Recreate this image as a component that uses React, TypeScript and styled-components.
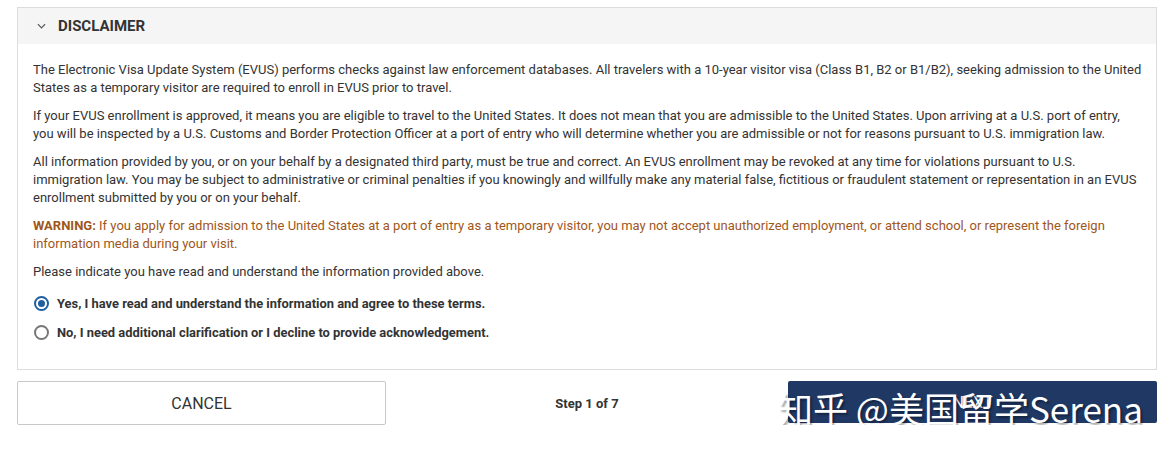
import React, { useState } from "react";
import styled, { createGlobalStyle } from "styled-components";

const GlobalStyle = createGlobalStyle`
  body {
    margin: 0;
    background: #ffffff;
    font-family: Roboto, "Liberation Sans", Arial, sans-serif;
    color: #333333;
  }
`;

const paragraphs = [
  "The Electronic Visa Update System (EVUS) performs checks against law enforcement databases. All travelers with a 10-year visitor visa (Class B1, B2 or B1/B2), seeking admission to the United States as a temporary visitor are required to enroll in EVUS prior to travel.",
  "If your EVUS enrollment is approved, it means you are eligible to travel to the United States. It does not mean that you are admissible to the United States. Upon arriving at a U.S. port of entry, you will be inspected by a U.S. Customs and Border Protection Officer at a port of entry who will determine whether you are admissible or not for reasons pursuant to U.S. immigration law.",
  "All information provided by you, or on your behalf by a designated third party, must be true and correct. An EVUS enrollment may be revoked at any time for violations pursuant to U.S. immigration law. You may be subject to administrative or criminal penalties if you knowingly and willfully make any material false, fictitious or fraudulent statement or representation in an EVUS enrollment submitted by you or on your behalf.",
];

const options = [
  "Yes, I have read and understand the information and agree to these terms.",
  "No, I need additional clarification or I decline to provide acknowledgement.",
];

function App() {
  const [choice, setChoice] = useState(0);

  return (
    <>
      <GlobalStyle />
      <Page>
        <Card>
          <CardHeader>
            <Chevron viewBox="0 0 10 6">
              <path d="M1 1l4 4 4-4" fill="none" stroke="#555" strokeWidth="1.3" />
            </Chevron>
            <HeaderTitle>DISCLAIMER</HeaderTitle>
          </CardHeader>
          <CardBody>
            {paragraphs.map((p) => (
              <Text key={p.slice(0, 20)}>{p}</Text>
            ))}
            <Warning>
              <strong>WARNING:</strong> If you apply for admission to the United States at a port of entry as a temporary visitor, you may not accept unauthorized employment, or attend school, or represent the foreign information media during your visit.
            </Warning>
            <Text>Please indicate you have read and understand the information provided above.</Text>
            <Options>
              {options.map((label, i) => (
                <Option key={label} onClick={() => setChoice(i)}>
                  <Radio $checked={choice === i} />
                  <OptionLabel>{label}</OptionLabel>
                </Option>
              ))}
            </Options>
          </CardBody>
        </Card>

        <Footer>
          <CancelButton>CANCEL</CancelButton>
          <StepText>Step 1 of 7</StepText>
          <NextWrap>
            <NextButton>NEXT</NextButton>
            <Watermark>知乎 @美国留学Serena</Watermark>
          </NextWrap>
        </Footer>
      </Page>
    </>
  );
}

export default App;

const Page = styled.div`
  width: 1140px;
  padding: 7px 15px 0 17px;
`;

const Card = styled.div`
  border: 1px solid #dcdcdc;
  background: #fff;
`;

const CardHeader = styled.div`
  height: 36px;
  display: flex;
  align-items: center;
  padding-left: 19px;
  background: #f5f5f5;
`;

const Chevron = styled.svg`
  width: 9px;
  height: 6px;
  margin-right: 12px;
`;

const HeaderTitle = styled.span`
  font-size: 15px;
  font-weight: 700;
  color: #333;
`;

const CardBody = styled.div`
  padding: 17px 14px 28px 15px;
`;

const Text = styled.p`
  margin: 0 0 10px 0;
  font-size: 13px;
  line-height: 18px;
  color: #333;
`;

const Warning = styled(Text)`
  color: #a0561a;
`;

const Options = styled.div`
  display: flex;
  flex-direction: column;
  gap: 11px;
  margin-top: 13px;
`;

const Option = styled.label`
  display: flex;
  align-items: center;
  height: 18px;
  cursor: pointer;
`;

const Radio = styled.span<{ $checked: boolean }>`
  box-sizing: border-box;
  width: 15px;
  height: 15px;
  margin-left: 1px;
  border-radius: 50%;
  border: 2px solid ${(p) => (p.$checked ? "#1f5f9f" : "#777")};
  margin-right: 8px;
  display: flex;
  align-items: center;
  justify-content: center;

  &::after {
    content: "";
    display: ${(p) => (p.$checked ? "block" : "none")};
    width: 7px;
    height: 7px;
    border-radius: 50%;
    background: #1f5f9f;
  }
`;

const OptionLabel = styled.span`
  font-size: 12.9px;
  font-weight: 700;
  color: #333;
`;

const Footer = styled.div`
  display: grid;
  grid-template-columns: 369px 1fr 369px;
  align-items: start;
  margin-top: 11px;
`;

const CancelButton = styled.button`
  height: 44px;
  border: 1px solid #c8c8c8;
  border-radius: 2px;
  background: #fff;
  font-family: Roboto, "Liberation Sans", Arial, sans-serif;
  font-size: 16px;
  color: #333;
  padding: 0;
  cursor: pointer;
`;

const StepText = styled.div`
  text-align: center;
  font-size: 13px;
  font-weight: 700;
  color: #333;
  padding-top: 15px;
`;

const NextWrap = styled.div`
  position: relative;
`;

const NextButton = styled.button`
  width: 100%;
  height: 42px;
  border: none;
  border-radius: 2px;
  background: #1f3864;
  color: #fff;
  font-family: Roboto, "Liberation Sans", Arial, sans-serif;
  font-size: 16px;
  padding: 0;
  cursor: pointer;
`;

const Watermark = styled.div`
  position: absolute;
  left: -10px;
  top: 6px;
  font-family: "Noto Sans CJK SC", "Noto Sans", sans-serif;
  font-size: 35px;
  line-height: 42px;
  color: #fff;
  white-space: nowrap;
  text-shadow: 2px 2px 2px rgba(0, 0, 0, 0.35);
  pointer-events: none;
`;
